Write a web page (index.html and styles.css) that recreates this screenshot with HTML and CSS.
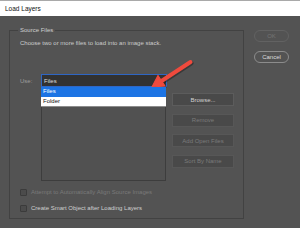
FILE: index.html
```html
<!DOCTYPE html>
<html>
<head>
<meta charset="utf-8">
<link rel="stylesheet" href="styles.css">
</head>
<body>
<div class="window">
  <div class="titlebar">Load Layers</div>
  <div class="content">
    <fieldset class="group">
      <legend class="legend">Source Files</legend>
      <p class="desc">Choose two or more files to load into an image stack.</p>
      <div class="use-row">
        <span class="use-label">Use:</span>
        <div class="select">
          <span class="select-value">Files</span>
          <ul class="dropdown">
            <li class="opt opt-selected">Files</li>
            <li class="opt">Folder</li>
          </ul>
        </div>
      </div>
      <div class="files-row">
        <div class="listbox"></div>
        <div class="side-buttons">
          <div class="btn">Browse...</div>
          <div class="btn btn-disabled">Remove</div>
          <div class="btn btn-disabled">Add Open Files</div>
          <div class="btn btn-disabled">Sort By Name</div>
        </div>
      </div>
      <div class="check-row check-disabled">
        <span class="checkbox"></span>
        <span>Attempt to Automatically Align Source Images</span>
      </div>
      <div class="check-row">
        <span class="checkbox"></span>
        <span>Create Smart Object after Loading Layers</span>
      </div>
    </fieldset>
    <div class="dialog-buttons">
      <div class="pill pill-disabled">OK</div>
      <div class="pill">Cancel</div>
    </div>
  </div>
  <svg class="arrow" width="300" height="228" viewBox="0 0 300 228">
    <g transform="translate(1,1.2)" fill="#1a1a1a" stroke="#1a1a1a" opacity="0.45">
      <line x1="190.5" y1="62" x2="160" y2="82" stroke-width="4.2" stroke-linecap="round"/>
      <polygon points="152,87 158,75.5 165,86" stroke-width="1.2" stroke-linejoin="round"/>
    </g>
    <g fill="#ef4a3d" stroke="#ef4a3d">
      <line x1="190.5" y1="62" x2="160" y2="82" stroke-width="4" stroke-linecap="round"/>
      <polygon points="152,87 158,75.5 165,86" stroke-width="1.2" stroke-linejoin="round"/>
    </g>
  </svg>
</div>
</body>
</html>
```

FILE: styles.css
```css
* { box-sizing: border-box; }
html, body {
  margin: 0;
  padding: 0;
}
body {
  width: 300px;
  height: 228px;
  overflow: hidden;
  background: #535353;
  font-family: "Liberation Sans", Arial, sans-serif;
  font-size: 6px;
  line-height: 8px;
  color: #cfcfcf;
}
.window {
  position: relative;
  width: 300px;
  height: 228px;
}
.titlebar {
  height: 16px;
  border-top: 1px solid #a9a9a9;
  background: #ffffff;
  color: #111;
  font-size: 6.5px;
  padding-left: 5px;
  display: flex;
  align-items: center;
}
.content {
  display: flex;
  padding-left: 9px;
}
.group {
  margin: 10px 0 0 0;
  width: 235px;
  height: 193px;
  border: 1px solid #424242;
  padding: 0 0 0 10px;
  min-width: 0;
}
.legend {
  padding: 0 2px;
  margin-left: -2px;
  line-height: 8px;
  color: #cfcfcf;
}
.desc {
  margin: 5px 0 0 0;
  color: #cccccc;
}
.use-row {
  display: flex;
  align-items: center;
  margin-top: 27px;
}
.use-label {
  width: 21px;
  color: #9d9d9d;
}
.select {
  position: relative;
  width: 126px;
  height: 13px;
  background: #323232;
  border: 1px solid #2f66c4;
  padding-left: 2px;
  display: flex;
  align-items: center;
  color: #dedede;
}
.dropdown {
  position: absolute;
  top: 12px;
  left: -1px;
  width: 125px;
  margin: 0;
  padding: 0;
  list-style: none;
  background: #ffffff;
  border-bottom: 1px solid #8c8c8c;
  z-index: 2;
}
.opt {
  height: 9.5px;
  line-height: 9.5px;
  padding-left: 2px;
  color: #111;
}
.opt-selected {
  background: #1c74e4;
  color: #ffffff;
}
.files-row {
  display: flex;
  margin-top: 1px;
}
.listbox {
  margin-left: 21px;
  width: 125px;
  height: 93px;
  border: 1px solid #3d3d3d;
  background: #515151;
}
.side-buttons {
  margin-left: 6px;
  margin-top: 5px;
  width: 62px;
  display: flex;
  flex-direction: column;
  gap: 7.5px;
}
.btn {
  height: 13px;
  background: #494949;
  border: 1px solid #5c5c5c;
  display: flex;
  align-items: center;
  justify-content: center;
  color: #d2d2d2;
}
.btn-disabled {
  color: #7b7b7b;
  border-color: #575757;
}
.check-row {
  display: flex;
  align-items: center;
  gap: 4px;
  height: 8px;
  margin-top: 7px;
  color: #d0d0d0;
}
.check-row + .check-row {
  margin-top: 8px;
}
.check-disabled {
  color: #7a7a7a;
}
.checkbox {
  width: 7px;
  height: 7px;
  border: 1px solid #3b3b3b;
  background: #4b4b4b;
  border-radius: 1px;
}
.dialog-buttons {
  margin-left: 10px;
  margin-top: 14px;
  display: flex;
  flex-direction: column;
  gap: 9px;
}
.pill {
  width: 35px;
  height: 12px;
  border: 1px solid #8c8c8c;
  border-radius: 6px;
  display: flex;
  align-items: center;
  justify-content: center;
  color: #dcdcdc;
}
.pill-disabled {
  border-color: #626262;
  color: #747474;
}
.arrow {
  position: absolute;
  left: 0;
  top: 0;
  pointer-events: none;
}
```
